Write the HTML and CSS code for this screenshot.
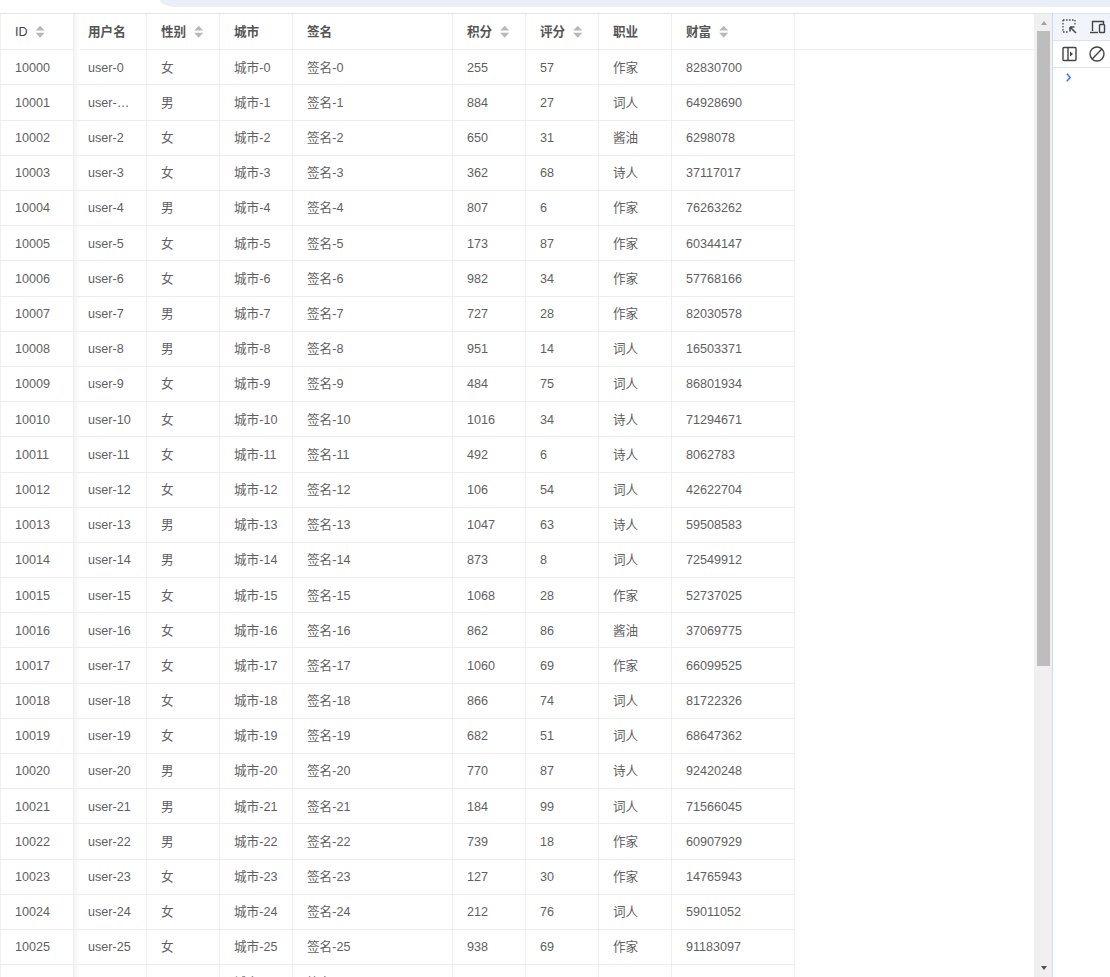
FILE: index.html
```html
<!DOCTYPE html>
<html lang="zh">
<head>
<meta charset="utf-8">
<title>Table</title>
<link rel="stylesheet" href="styles.css">
</head>
<body>
<div class="top"><div class="top-pill"></div></div>
<div class="workspace">
  <main class="table">
    <div class="row head">
      <div class="cell fixed latin">ID<i class="sort"></i></div><div class="cell">用户名</div><div class="cell">性别<i class="sort"></i></div><div class="cell">城市</div><div class="cell">签名</div><div class="cell">积分<i class="sort"></i></div><div class="cell">评分<i class="sort"></i></div><div class="cell">职业</div><div class="cell">财富<i class="sort"></i></div>
    </div>
    <div class="row"><div class="cell fixed">10000</div><div class="cell">user-0</div><div class="cell">女</div><div class="cell">城市-0</div><div class="cell">签名-0</div><div class="cell">255</div><div class="cell">57</div><div class="cell">作家</div><div class="cell">82830700</div></div>
    <div class="row"><div class="cell fixed">10001</div><div class="cell">user-…</div><div class="cell">男</div><div class="cell">城市-1</div><div class="cell">签名-1</div><div class="cell">884</div><div class="cell">27</div><div class="cell">词人</div><div class="cell">64928690</div></div>
    <div class="row"><div class="cell fixed">10002</div><div class="cell">user-2</div><div class="cell">女</div><div class="cell">城市-2</div><div class="cell">签名-2</div><div class="cell">650</div><div class="cell">31</div><div class="cell">酱油</div><div class="cell">6298078</div></div>
    <div class="row"><div class="cell fixed">10003</div><div class="cell">user-3</div><div class="cell">女</div><div class="cell">城市-3</div><div class="cell">签名-3</div><div class="cell">362</div><div class="cell">68</div><div class="cell">诗人</div><div class="cell">37117017</div></div>
    <div class="row"><div class="cell fixed">10004</div><div class="cell">user-4</div><div class="cell">男</div><div class="cell">城市-4</div><div class="cell">签名-4</div><div class="cell">807</div><div class="cell">6</div><div class="cell">作家</div><div class="cell">76263262</div></div>
    <div class="row"><div class="cell fixed">10005</div><div class="cell">user-5</div><div class="cell">女</div><div class="cell">城市-5</div><div class="cell">签名-5</div><div class="cell">173</div><div class="cell">87</div><div class="cell">作家</div><div class="cell">60344147</div></div>
    <div class="row"><div class="cell fixed">10006</div><div class="cell">user-6</div><div class="cell">女</div><div class="cell">城市-6</div><div class="cell">签名-6</div><div class="cell">982</div><div class="cell">34</div><div class="cell">作家</div><div class="cell">57768166</div></div>
    <div class="row"><div class="cell fixed">10007</div><div class="cell">user-7</div><div class="cell">男</div><div class="cell">城市-7</div><div class="cell">签名-7</div><div class="cell">727</div><div class="cell">28</div><div class="cell">作家</div><div class="cell">82030578</div></div>
    <div class="row"><div class="cell fixed">10008</div><div class="cell">user-8</div><div class="cell">男</div><div class="cell">城市-8</div><div class="cell">签名-8</div><div class="cell">951</div><div class="cell">14</div><div class="cell">词人</div><div class="cell">16503371</div></div>
    <div class="row"><div class="cell fixed">10009</div><div class="cell">user-9</div><div class="cell">女</div><div class="cell">城市-9</div><div class="cell">签名-9</div><div class="cell">484</div><div class="cell">75</div><div class="cell">词人</div><div class="cell">86801934</div></div>
    <div class="row"><div class="cell fixed">10010</div><div class="cell">user-10</div><div class="cell">女</div><div class="cell">城市-10</div><div class="cell">签名-10</div><div class="cell">1016</div><div class="cell">34</div><div class="cell">诗人</div><div class="cell">71294671</div></div>
    <div class="row"><div class="cell fixed">10011</div><div class="cell">user-11</div><div class="cell">女</div><div class="cell">城市-11</div><div class="cell">签名-11</div><div class="cell">492</div><div class="cell">6</div><div class="cell">诗人</div><div class="cell">8062783</div></div>
    <div class="row"><div class="cell fixed">10012</div><div class="cell">user-12</div><div class="cell">女</div><div class="cell">城市-12</div><div class="cell">签名-12</div><div class="cell">106</div><div class="cell">54</div><div class="cell">词人</div><div class="cell">42622704</div></div>
    <div class="row"><div class="cell fixed">10013</div><div class="cell">user-13</div><div class="cell">男</div><div class="cell">城市-13</div><div class="cell">签名-13</div><div class="cell">1047</div><div class="cell">63</div><div class="cell">诗人</div><div class="cell">59508583</div></div>
    <div class="row"><div class="cell fixed">10014</div><div class="cell">user-14</div><div class="cell">男</div><div class="cell">城市-14</div><div class="cell">签名-14</div><div class="cell">873</div><div class="cell">8</div><div class="cell">词人</div><div class="cell">72549912</div></div>
    <div class="row"><div class="cell fixed">10015</div><div class="cell">user-15</div><div class="cell">女</div><div class="cell">城市-15</div><div class="cell">签名-15</div><div class="cell">1068</div><div class="cell">28</div><div class="cell">作家</div><div class="cell">52737025</div></div>
    <div class="row"><div class="cell fixed">10016</div><div class="cell">user-16</div><div class="cell">女</div><div class="cell">城市-16</div><div class="cell">签名-16</div><div class="cell">862</div><div class="cell">86</div><div class="cell">酱油</div><div class="cell">37069775</div></div>
    <div class="row"><div class="cell fixed">10017</div><div class="cell">user-17</div><div class="cell">女</div><div class="cell">城市-17</div><div class="cell">签名-17</div><div class="cell">1060</div><div class="cell">69</div><div class="cell">作家</div><div class="cell">66099525</div></div>
    <div class="row"><div class="cell fixed">10018</div><div class="cell">user-18</div><div class="cell">女</div><div class="cell">城市-18</div><div class="cell">签名-18</div><div class="cell">866</div><div class="cell">74</div><div class="cell">词人</div><div class="cell">81722326</div></div>
    <div class="row"><div class="cell fixed">10019</div><div class="cell">user-19</div><div class="cell">女</div><div class="cell">城市-19</div><div class="cell">签名-19</div><div class="cell">682</div><div class="cell">51</div><div class="cell">词人</div><div class="cell">68647362</div></div>
    <div class="row"><div class="cell fixed">10020</div><div class="cell">user-20</div><div class="cell">男</div><div class="cell">城市-20</div><div class="cell">签名-20</div><div class="cell">770</div><div class="cell">87</div><div class="cell">诗人</div><div class="cell">92420248</div></div>
    <div class="row"><div class="cell fixed">10021</div><div class="cell">user-21</div><div class="cell">男</div><div class="cell">城市-21</div><div class="cell">签名-21</div><div class="cell">184</div><div class="cell">99</div><div class="cell">词人</div><div class="cell">71566045</div></div>
    <div class="row"><div class="cell fixed">10022</div><div class="cell">user-22</div><div class="cell">男</div><div class="cell">城市-22</div><div class="cell">签名-22</div><div class="cell">739</div><div class="cell">18</div><div class="cell">作家</div><div class="cell">60907929</div></div>
    <div class="row"><div class="cell fixed">10023</div><div class="cell">user-23</div><div class="cell">女</div><div class="cell">城市-23</div><div class="cell">签名-23</div><div class="cell">127</div><div class="cell">30</div><div class="cell">作家</div><div class="cell">14765943</div></div>
    <div class="row"><div class="cell fixed">10024</div><div class="cell">user-24</div><div class="cell">女</div><div class="cell">城市-24</div><div class="cell">签名-24</div><div class="cell">212</div><div class="cell">76</div><div class="cell">词人</div><div class="cell">59011052</div></div>
    <div class="row"><div class="cell fixed">10025</div><div class="cell">user-25</div><div class="cell">女</div><div class="cell">城市-25</div><div class="cell">签名-25</div><div class="cell">938</div><div class="cell">69</div><div class="cell">作家</div><div class="cell">91183097</div></div>
    <div class="row"><div class="cell fixed"></div><div class="cell"></div><div class="cell"></div><div class="cell">城市-26</div><div class="cell">签名-26</div><div class="cell"></div><div class="cell"></div><div class="cell"></div><div class="cell"></div></div>
  </main>
  <div class="scrollbar">
    <span class="arrow up"></span>
    <div class="thumb"></div>
    <span class="arrow down"></span>
  </div>
  <aside class="devtools">
    <div class="tool-row active">
      <svg class="tool" viewBox="0 0 16 16" width="16" height="16" fill="none" stroke="#4a4a4a" stroke-width="1.3"><path d="M1 1h12v6M1 1v12h6" stroke-dasharray="1.6 1.4"/><path d="M8 8l6 6M8 8h4.5M8 8v4.5" stroke-width="1.6"/></svg>
      <svg class="tool" viewBox="0 0 18 16" width="18" height="16" fill="none" stroke="#444" stroke-width="1.4"><path d="M3.5 12V2.5h11V5"/><path d="M1 13.5h8"/><rect x="10.5" y="5.5" width="5" height="8" rx=".8"/></svg>
    </div>
    <div class="tool-row">
      <svg class="tool" viewBox="0 0 16 16" width="16" height="16" fill="none" stroke="#444" stroke-width="1.4"><rect x="1" y="1.5" width="13" height="13" rx="1"/><path d="M6 1.5v13"/><path d="M8 5.5l3 2.5-3 2.5z" fill="#444" stroke="none"/></svg>
      <svg class="tool" viewBox="0 0 18 16" width="18" height="16" fill="none" stroke="#444" stroke-width="1.4"><circle cx="8" cy="8" r="7"/><path d="M3.2 13 12.8 3"/></svg>
    </div>
    <svg class="chevron" viewBox="0 0 5 9" width="5" height="9" fill="none" stroke="#2f7bf0" stroke-width="1.5"><path d="M.8 .8l3.4 3.7-3.4 3.7"/></svg>
  </aside>
</div>
</body>
</html>
```

FILE: styles.css
```css
* { box-sizing: border-box; }
html, body { margin: 0; height: 100%; overflow: hidden; background: #fff; }
body {
  display: flex;
  flex-direction: column;
  font-family: "Liberation Sans", "Noto Sans CJK SC", sans-serif;
  font-size: 12.6px;
  line-height: 20px;
  color: #5f5f5f;
}
.top { height: 13px; flex: none; padding-left: 160px; }
.top-pill { height: 7px; background: #e9eef8; border-bottom-left-radius: 16px 7px; }
.workspace {
  flex: 1;
  display: flex;
  min-height: 0;
}
.table {
  flex: none;
  width: 1034px;
  overflow: hidden;
  border-top: 1px solid #e4e4e4;
  border-left: 1px solid #f0f0f0;
}
.row {
  display: grid;
  grid-template-columns: repeat(4, 73px) 160px repeat(3, 73px) 123px;
  justify-content: start;
  height: 35.19px;
}
.cell {
  display: flex;
  align-items: center;
  padding: 0.74px 0 0 14px;
  border-right: 1px solid #eee;
  border-bottom: 1px solid #eee;
  white-space: nowrap;
  position: relative;
}
.head { height: 36.25px; border-bottom: 1px solid #eee; margin-right: -1px; }
.head .cell { padding-top: 0; font-weight: 700; color: #555; border-bottom: 0; }
.head .latin { font-weight: 400; color: #444; }
.fixed::after {
  content: "";
  position: absolute;
  top: 0;
  bottom: -1px;
  left: 100%;
  margin-left: 1px;
  width: 6px;
  background: linear-gradient(to right, #f4f4f4, #fff);
  pointer-events: none;
}
.sort {
  width: 9px;
  height: 12px;
  margin-left: 8px;
  background: #b8b8b8;
  clip-path: polygon(50% 0, 100% 40%, 0 40%, 50% 0, 0 60%, 100% 60%, 50% 100%, 0 60%);
}
.scrollbar {
  flex: none;
  width: 18px;
  background: #f0f0f0;
  border-top: 1px solid #e4e4e4;
  padding: 0 2px 0 3px;
  display: flex;
  flex-direction: column;
  align-items: stretch;
}
.arrow { width: 0; height: 0; align-self: center; border-left: 3.5px solid transparent; border-right: 3.5px solid transparent; }
.up { margin-top: 7px; border-bottom: 4px solid #a3a3a3; }
.thumb { margin-top: 6px; height: 635px; background: #bdbdbd; }
.down { margin-top: auto; margin-bottom: 7px; border-top: 4px solid #505050; }
.devtools {
  flex: 1;
  border-left: 1px solid #c6dafc;
  border-top: 1px solid #d6e3f8;
  display: flex;
  flex-direction: column;
  min-width: 0;
}
.tool-row {
  display: flex;
  gap: 11px;
  align-items: center;
  height: 27px;
  padding-left: 9px;
  border-bottom: 1px solid #d6e3f8;
}
.active { background: #f1f5fb; }
.tool { flex: none; }
.chevron { margin: 5px 0 0 13px; }
```
